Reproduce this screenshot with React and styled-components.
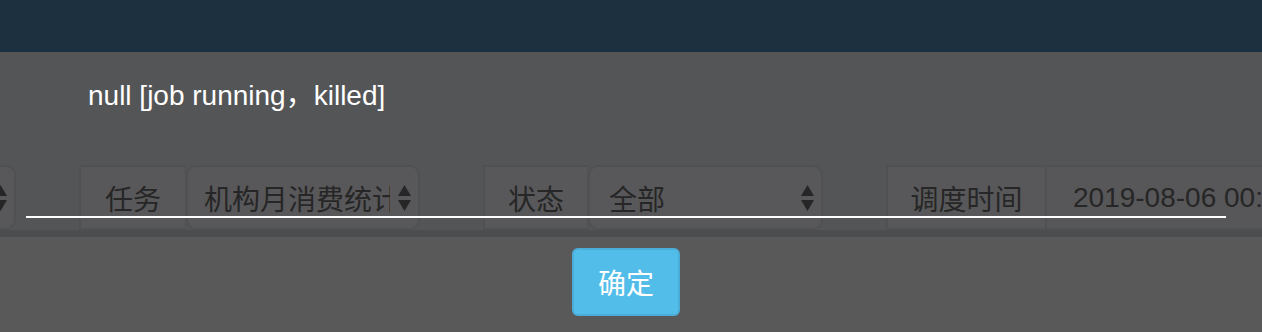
import React from 'react'
import styled, { createGlobalStyle } from 'styled-components'

const GlobalStyle = createGlobalStyle`
  html, body {
    margin: 0;
    padding: 0;
    background: #595959;
    overflow: hidden;
  }
  body {
    font-family: 'Liberation Sans', 'Noto Sans CJK SC', sans-serif;
  }
`

const Page = styled.div`
  width: 1262px;
  height: 332px;
  display: flex;
  flex-direction: column;
  overflow: hidden;
`

const TopBar = styled.div`
  height: 52px;
  background: #1c3040;
  flex-shrink: 0;
`

const Panel = styled.div`
  background: #545557;
  padding-top: 24px;
`

const Message = styled.div`
  padding-left: 88px;
  color: #ffffff;
  font-size: 28px;
  line-height: 40px;
  height: 40px;
`

const FilterRow = styled.div`
  position: relative;
  margin-top: 49px;
  height: 65px;
  display: flex;
  align-items: stretch;
  gap: 63px;
  border-bottom: 7px solid #4c4d4f;
`

const Group = styled.div`
  display: flex;
  align-items: stretch;
  flex-shrink: 0;
`

const Label = styled.div`
  box-sizing: border-box;
  width: ${(p) => p.$width}px;
  display: flex;
  align-items: center;
  justify-content: center;
  background: #58585a;
  border: 2px solid #505153;
  border-right-width: 1px;
  color: #262626;
  font-size: 28px;
  white-space: nowrap;
`

const Select = styled.div`
  box-sizing: border-box;
  width: ${(p) => p.$width}px;
  margin-left: ${(p) => p.$offset || 0}px;
  display: flex;
  align-items: center;
  padding: 0 7px 0 ${(p) => p.$pad || 16}px;
  background: #58585a;
  border: 2px solid #505153;
  border-radius: 10px;
  color: #262626;
  font-size: 28px;
`

const SelectText = styled.span`
  flex: 1;
  overflow: hidden;
  white-space: nowrap;
`

const Arrows = styled.svg`
  flex-shrink: 0;
  margin-left: 8px;
`

const DateInput = styled.div`
  box-sizing: border-box;
  width: 320px;
  display: flex;
  align-items: center;
  padding-left: 26px;
  background: #575759;
  border: 2px solid #505153;
  border-left-width: 1px;
  color: #262626;
  font-size: 28px;
  white-space: nowrap;
`

const Rule = styled.div`
  position: absolute;
  left: 26px;
  top: 51px;
  width: 1200px;
  height: 2px;
  background: #ffffff;
`

const Footer = styled.div`
  flex: 1;
  background: #595959;
  display: flex;
  justify-content: center;
  align-items: flex-start;
  padding: 11px 10px 0 0;
`

const ConfirmButton = styled.button`
  box-sizing: border-box;
  width: 108px;
  height: 68px;
  background: #53bde9;
  border: 2px solid #4aaed8;
  border-radius: 6px;
  color: #ffffff;
  font-family: 'Liberation Sans', 'Noto Sans CJK SC', sans-serif;
  font-size: 28px;
  padding: 0;
`

const SortArrows = () => (
  <Arrows width="13" height="26" viewBox="0 0 13 26">
    <polygon points="6.5,0 13,11 0,11" fill="#262626" />
    <polygon points="0,15 13,15 6.5,26" fill="#262626" />
  </Arrows>
)

export default function App() {
  return (
    <>
      <GlobalStyle />
      <Page>
        <TopBar />
        <Panel>
          <Message>null [job running，killed]</Message>
          <FilterRow>
            <Group>
              <Select $width={120} $offset={-104}>
                <SelectText />
                <SortArrows />
              </Select>
            </Group>
            <Group>
              <Label $width={107}>任务</Label>
              <Select $width={234}>
                <SelectText>机构月消费统计</SelectText>
                <SortArrows />
              </Select>
            </Group>
            <Group>
              <Label $width={105}>状态</Label>
              <Select $width={235} $pad={19}>
                <SelectText>全部</SelectText>
                <SortArrows />
              </Select>
            </Group>
            <Group>
              <Label $width={160}>调度时间</Label>
              <DateInput>2019-08-06 00:00:00</DateInput>
            </Group>
            <Rule />
          </FilterRow>
        </Panel>
        <Footer>
          <ConfirmButton>确定</ConfirmButton>
        </Footer>
      </Page>
    </>
  )
}
